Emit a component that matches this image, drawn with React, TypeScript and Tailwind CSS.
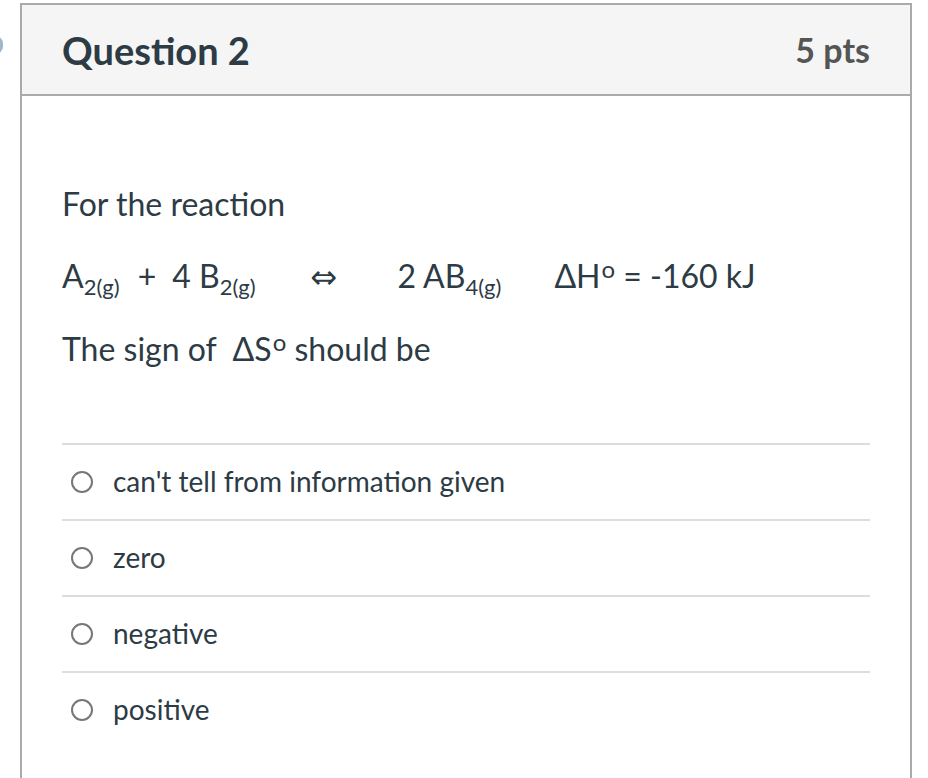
import React from "react";

const answers = ["can't tell from information given", "zero", "negative", "positive"];

function Sub({ children }: { children: React.ReactNode }) {
  return <span className="relative top-[7px] text-[22px] leading-none">{children}</span>;
}

function Sup({ children }: { children: React.ReactNode }) {
  return <span className="relative top-[-10px] ml-[1px] text-[24px] leading-none">{children}</span>;
}

export default function App() {
  return (
    <div
      className="relative min-h-[778px] w-[928px] overflow-hidden bg-white text-[#2d3b45]"
      style={{ fontFamily: "Lato, 'Open Sans', sans-serif" }}
    >
      {/* partial nav dot at the left edge */}
      <div className="absolute left-[-12px] top-[36px] h-[18px] w-[15px] rounded-full bg-[#9fb6cf]" />

      <div className="ml-[20px] mt-[3px] w-[892px] border-2 border-b-0 border-[#aaaaaa]">
        {/* header */}
        <div className="flex h-[91px] items-center justify-between border-b-2 border-[#aaaaaa] bg-[#f5f5f5] pl-[40px] pr-[40px]">
          <h2 className="text-[38px] font-bold leading-none text-[#2d3b45]">Question 2</h2>
          <span className="text-[34px] font-bold leading-none text-[#555555]">5 pts</span>
        </div>

        {/* body */}
        <div className="px-[40px] pt-[84px] pb-[40px] text-[32px]">
          <p className="h-[48px] leading-[48px]">For the reaction</p>
          <p className="mt-[24px] flex h-[48px] items-baseline whitespace-nowrap leading-[48px]">
            <span>
              A<Sub>2(g)</Sub>
            </span>
            <span className="ml-[18px]">+</span>
            <span className="ml-[16px]">
              4 B<Sub>2(g)</Sub>
            </span>
            <span
              className="ml-[55px] text-[32px]"
              style={{ fontFamily: "'DejaVu Sans', sans-serif" }}
            >
              ⇔
            </span>
            <span className="ml-[60px]">
              2 AB<Sub>4(g)</Sub>
            </span>
            <span className="ml-[53px]">
              ΔH<Sup>o</Sup> = -160 kJ
            </span>
          </p>
          <p className="mt-[25px] h-[48px] leading-[48px]">
            The sign of&nbsp; ΔS<Sup>o</Sup> should be
          </p>

          <div className="mt-[70px]">
            {answers.map((a) => (
              <div key={a} className="flex h-[76px] items-center border-t-2 border-[#dddddd] pl-[9px]">
                <span className="h-[22px] w-[22px] shrink-0 rounded-full border-2 border-[#777777] bg-white" />
                <span className="ml-[20px] mb-[3px] text-[28px] leading-none">{a}</span>
              </div>
            ))}
          </div>
        </div>
      </div>
    </div>
  );
}
